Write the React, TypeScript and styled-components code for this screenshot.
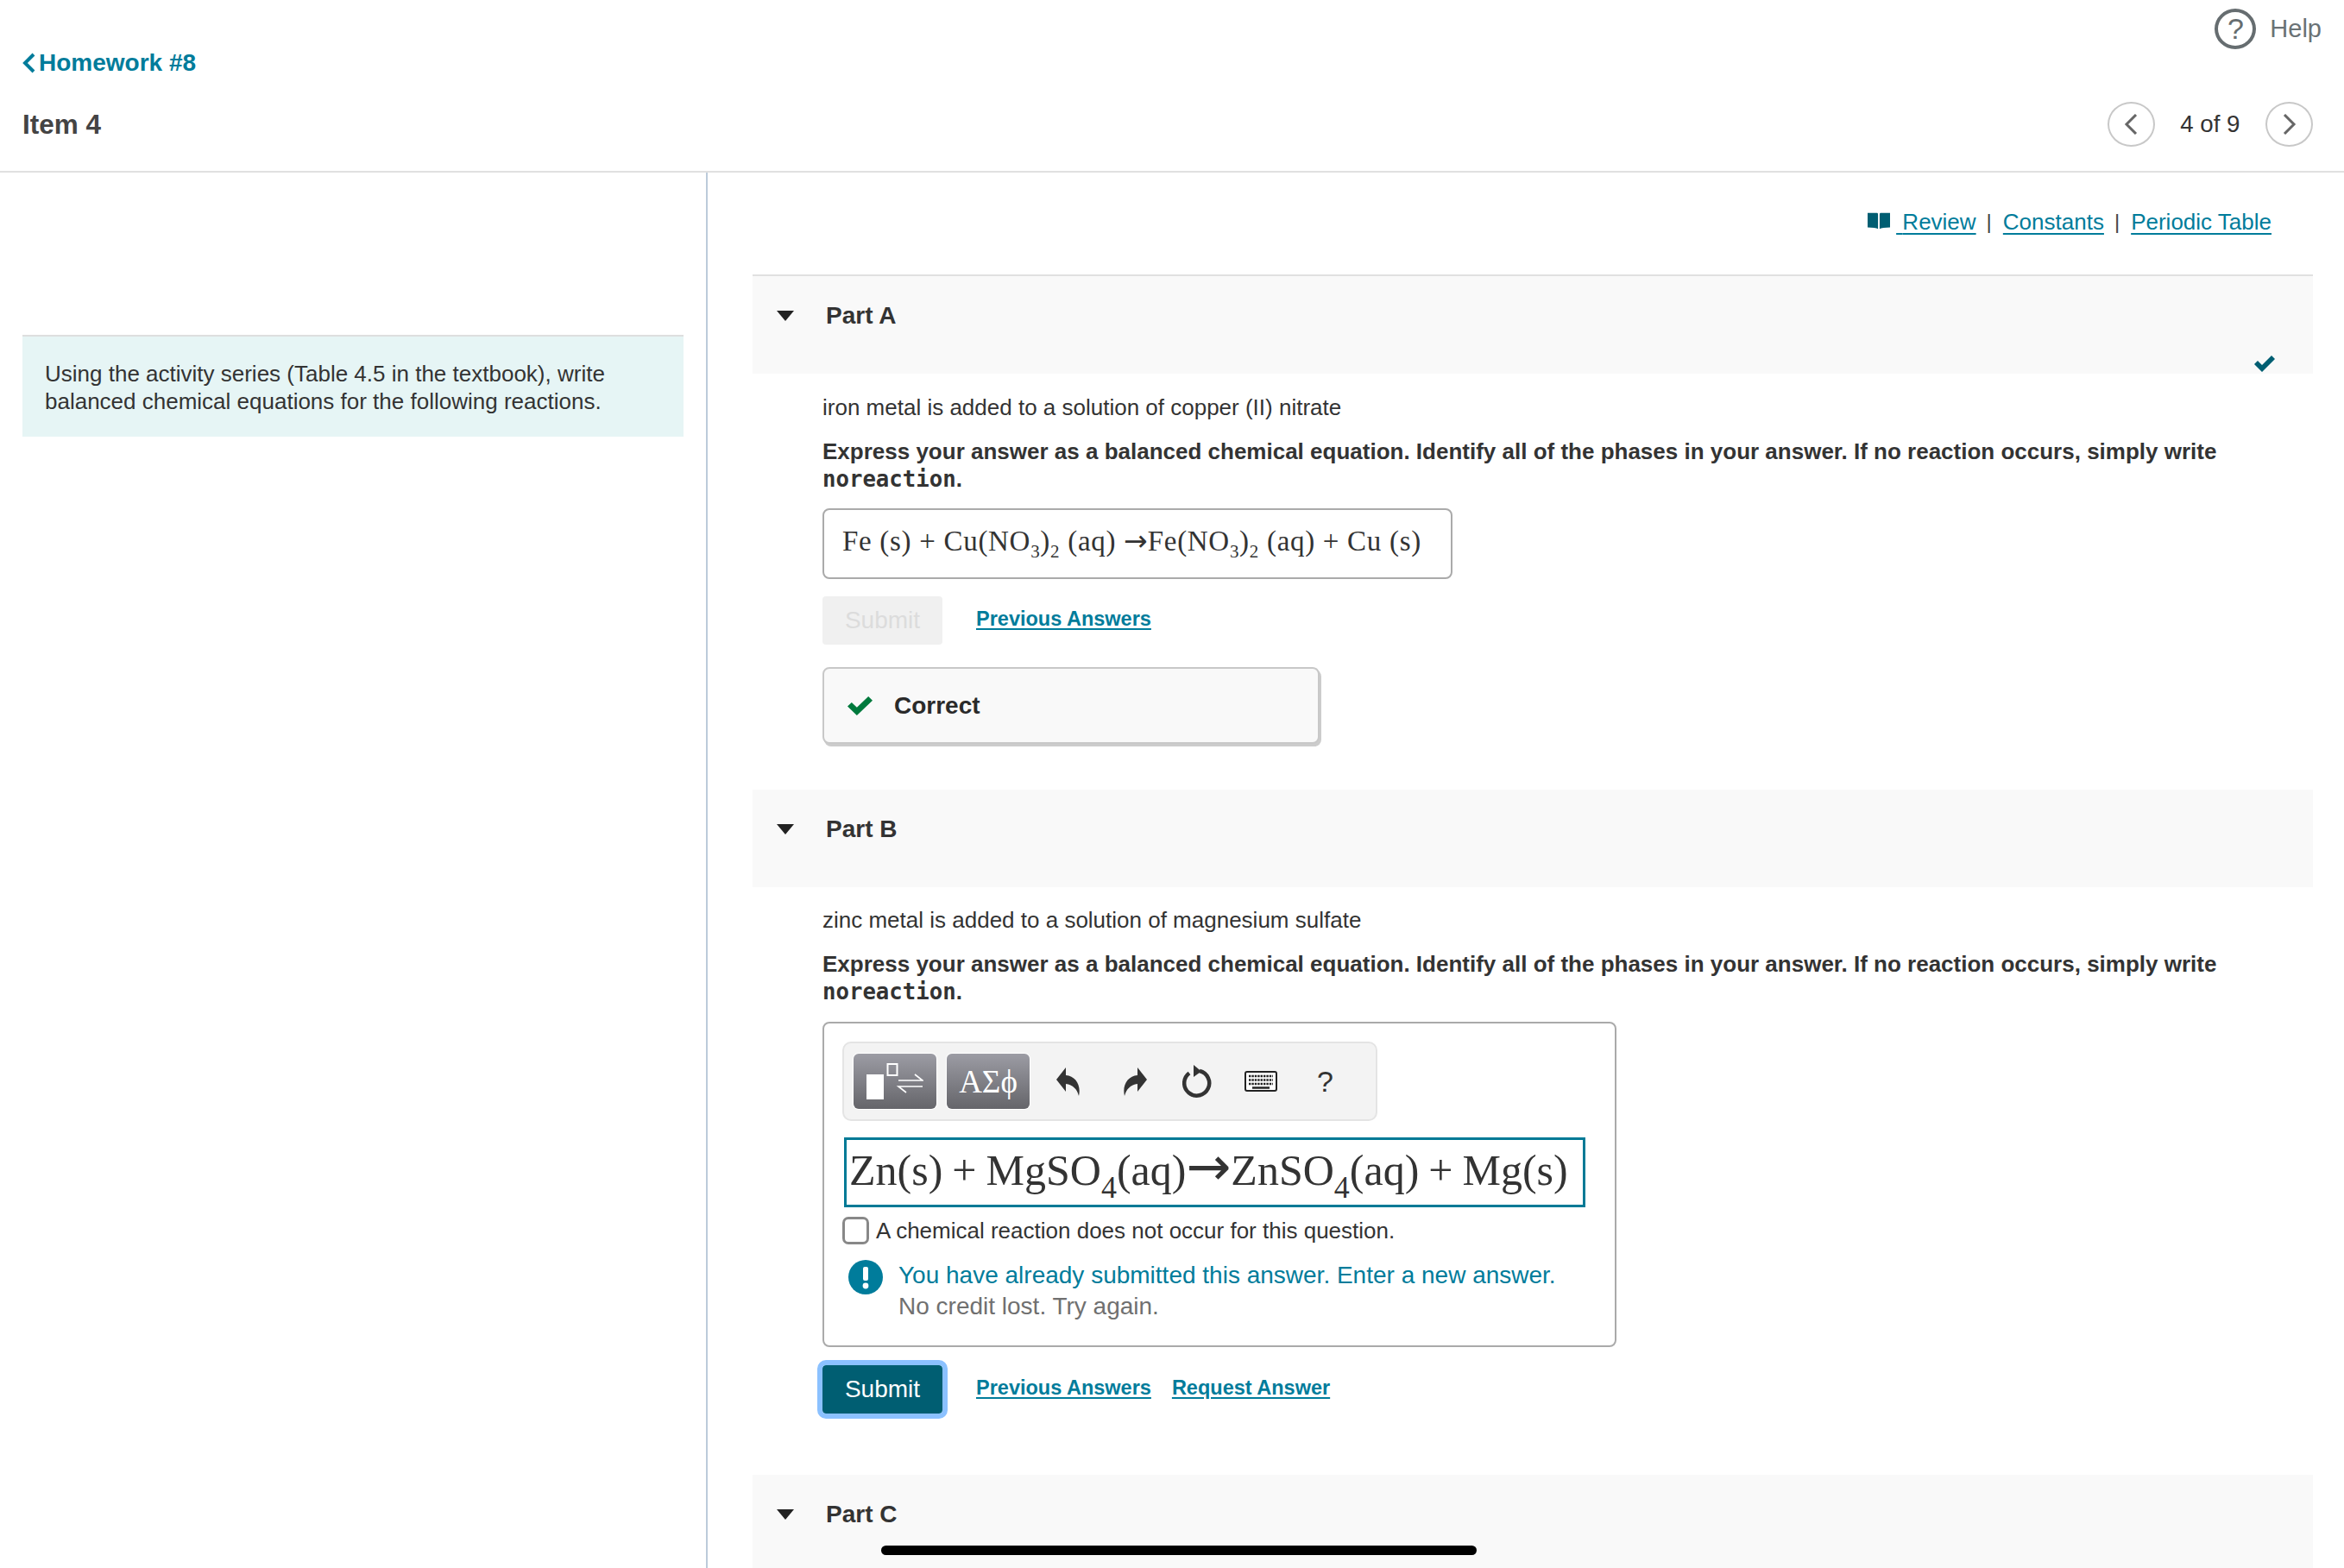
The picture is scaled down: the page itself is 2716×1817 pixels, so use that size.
import React from "react";
import styled, { createGlobalStyle } from "styled-components";

const Global = createGlobalStyle`
  html, body { margin: 0; padding: 0; background: #fff; }
  body { font-family: "Liberation Sans", Arial, sans-serif; color: #333; }
  #root { height: 1817px; overflow: hidden; }
  * { box-sizing: border-box; }
`;

const Page = styled.div`position: relative; height: 1817px; overflow: hidden; display: flex; flex-direction: column;`;
const Header = styled.header`height: 200px; border-bottom: 2px solid #e0e0e0; padding: 0 36px 0 26px; flex: none;`;
const HelpRow = styled.div`height: 57px; padding-top: 10px; margin-right: -10px; display: flex; justify-content: flex-end; gap: 16px; color: #6a7275; font-size: 29px;`;
const HelpCircle = styled.span`width: 48px; height: 47px; border: 4px solid #666d70; border-radius: 50%; display: flex; align-items: center; justify-content: center; font-size: 34px; color: #666d70;`;
const HelpText = styled.span`line-height: 47px;`;
const BackLink = styled.a`display: flex; align-items: center; gap: 4px; height: 32px; color: #007c9b; font-size: 28px; font-weight: 700;`;
const ItemRow = styled.div`display: flex; justify-content: space-between; align-items: center; padding-top: 29px;`;
const ItemTitle = styled.h1`margin: 0; font-size: 31.5px; font-weight: 700; color: #444;`;
const Pager = styled.div`display: flex; align-items: center; gap: 29.5px; font-size: 27.7px; color: #333;`;
const PagerButton = styled.span`width: 55px; height: 52px; border: 2px solid #c8c8c8; border-radius: 50%; display: flex; align-items: center; justify-content: center;`;

const Main = styled.main`flex: 1; display: grid; grid-template-columns: 820px 1fr; min-height: 0;`;
const LeftColumn = styled.aside`border-right: 2px solid #bccbda; padding: 188px 26px 0 26px;`;
const Intro = styled.div`border-top: 2px solid #dedede; background: #e6f5f5; padding: 27px 26px 25px; font-size: 26px; line-height: 32px; color: #333;`;
const RightColumn = styled.section`padding: 41px 36px 0 52px;`;
const TopLinks = styled.nav`display: flex; justify-content: flex-end; align-items: center; height: 32px; padding-right: 48px; margin-bottom: 45px; font-size: 26px; color: #444;`;
const TextLink = styled.a`color: #007c9b; text-decoration: underline; text-underline-offset: 4px; white-space: pre;`;
const BookIcon = styled.svg`width: 26px; height: 20px; margin: -2px 7px 0 0;`;
const Sep = styled.span`margin: 0 13px 0 12px; font-size: 24px;`;

const PartHeader = styled.div<{ $border?: boolean }>`
  position: relative; display: flex; gap: 37px; align-items: flex-start; background: #f9f9f9;
  height: ${(p) => (p.$border ? 115 : 113)}px;
  border-top: ${(p) => (p.$border ? "2px solid #e0e0e0" : "none")};
  padding: 30px 0 0 28px;
`;
const Triangle = styled.span`width: 0; height: 0; margin-top: 10px; border-left: 10.5px solid transparent; border-right: 10.5px solid transparent; border-top: 12px solid #222;`;
const PartTitle = styled.h2`margin: 0; font-size: 28px; line-height: 32px; font-weight: 700; color: #333;`;
const PartCheck = styled.svg`position: absolute; left: 1740px; top: 92px; width: 24px; height: 19px;`;
const PartBody = styled.div<{ $top: number; $bottom: number }>`padding: ${(p) => p.$top}px 0 0 81px; margin-bottom: ${(p) => p.$bottom}px;`;
const Prompt = styled.p`margin: 0; font-size: 26px; line-height: 32px; color: #333;`;
const Instruction = styled.p`margin: 19px 0 0; font-size: 26px; line-height: 32px; font-weight: 700; color: #333;`;
const Mono = styled.code`font-family: "DejaVu Sans Mono", monospace; font-size: 25.7px; line-height: 0; font-weight: 700;`;

const AnswerBox = styled.div`margin-top: 18px; width: 730px; height: 82px; border: 2px solid #aaa; border-radius: 8px; padding: 0 0 6px 21px; display: flex; align-items: center; font-family: "Liberation Serif", serif; font-size: 33px; letter-spacing: 0.7px; color: #333; white-space: pre;`;
const Equation = styled.span`display: block;`;
const SmallSub = styled.sub`font-size: 21px; line-height: 0; vertical-align: -8px;`;
const SmallArrow = styled.span`font-family: "DejaVu Sans", sans-serif; font-size: 33px; font-weight: 400; letter-spacing: 0; line-height: 0;`;
const ActionRow = styled.div<{ $top: number }>`display: flex; align-items: flex-start; margin-top: ${(p) => p.$top}px;`;
const SubmitButton = styled.button<{ $active?: boolean }>`
  width: 139px; height: 56px; border: 0; border-radius: 4px; font: 400 28px "Liberation Sans", sans-serif; padding: 0;
  background: ${(p) => (p.$active ? "#005e72" : "#f0f0f0")};
  color: ${(p) => (p.$active ? "#fff" : "#dcdcdc")};
  outline: ${(p) => (p.$active ? "6px solid #8bc1ff" : "none")};
  margin-right: 39px;
`;
const ActionLink = styled.a`margin: 10px 24px 0 0; line-height: 32px; font-size: 23.5px; font-weight: 700; color: #007c9b; text-decoration: underline; text-underline-offset: 3px;`;
const Correct = styled.div`margin-top: 26px; width: 576px; height: 89px; background: #f9f9f9; border: 2px solid #c8c8c8; border-radius: 8px; box-shadow: 2px 3px 0 #ccc; display: flex; align-items: center; gap: 25px; padding-left: 27px; font-size: 28px; font-weight: 700; color: #2a2a2a;`;

const EditorBox = styled.div`margin-top: 19px; width: 920px; height: 377px; border: 2px solid #aaa; border-radius: 8px; padding: 21px 0 0 21px;`;
const Toolbar = styled.div`width: 620px; height: 92px; background: #f3f3f3; border: 2px solid #e4e4e4; border-radius: 10px; display: flex; align-items: center; padding-left: 11px;`;
const ToolButton = styled.span`width: 96px; height: 64px; margin-right: 12px; border-radius: 6px; background: linear-gradient(#9c9ca4, #65656a); box-shadow: 0 0 0 1px #fff; display: flex; align-items: center; justify-content: center; color: #fff; font-family: "Liberation Serif", "DejaVu Serif", serif; font-size: 37px;`;
const ToolIcon = styled.svg<{ $w: number; $left: number }>`flex: none; width: ${(p) => p.$w}px; margin-left: ${(p) => p.$left}px;`;
const ToolQuestion = styled.span`margin-left: 46px; font-size: 34px; color: #333; width: 18px; text-align: center;`;
const MathInput = styled.div`margin: 19px 0 0 2px; width: 859px; height: 81px; border: 3px solid #007a96; display: flex; align-items: center; padding: 0 0 6px 3px; font-family: "Liberation Serif", serif; font-size: 50px; color: #333; white-space: pre;`;
const MathSub = styled.sub`font-size: 36px; line-height: 0; vertical-align: -15px;`;
const MathPlus = styled.span`margin: 0 11px;`;
const MathArrow = styled.span`font-family: "DejaVu Sans", sans-serif; font-size: 62px; line-height: 0;`;
const CheckRow = styled.label`margin-top: 11px; display: flex; align-items: center; gap: 8px; font-size: 26px; line-height: 32px; color: #333;`;
const CheckBox = styled.span`width: 31px; height: 32px; border: 3px solid #888; border-radius: 7px;`;
const Feedback = styled.div`margin: 18px 0 0 7px; display: flex; gap: 18px; font-size: 28px; line-height: 36px;`;
const InfoIcon = styled.svg`width: 40px; height: 40px; flex: none;`;
const FeedbackLead = styled.div`color: #007c9b;`;
const FeedbackNote = styled.div`color: #707070;`;
const HomeBar = styled.div`position: absolute; left: 1021px; top: 1791px; width: 690px; height: 11px; border-radius: 6px; background: #000;`;

const Tick = ({ color }: { color: string }) => (
  <path d="M0 10 L4 6 L9 11 L20 0 L24 4 L9 19 Z" fill={color} />
);

const Undo = ({ flip }: { flip?: boolean }) => (
  <g transform={flip ? "translate(28 0) scale(-1 1)" : undefined}>
    <path d="M0 14 L11 0 V9 C22 10 29 20 26 33 C24 25 19 20 11 19 V28 Z" fill="#333" />
  </g>
);

export default function App() {
  return (
    <Page>
      <Global />
      <Header>
        <HelpRow>
          <HelpCircle>?</HelpCircle>
          <HelpText>Help</HelpText>
        </HelpRow>
        <BackLink>
          <svg width="15" height="24" viewBox="0 0 15 24"><path d="M13 2 L3 12 L13 22" fill="none" stroke="#007c9b" strokeWidth="4" /></svg>
          Homework #8
        </BackLink>
        <ItemRow>
          <ItemTitle>Item 4</ItemTitle>
          <Pager>
            <PagerButton>
              <svg width="16" height="24" viewBox="0 0 16 24"><path d="M14 1 L3 12 L14 23" fill="none" stroke="#666" strokeWidth="3" /></svg>
            </PagerButton>
            <span>4 of 9</span>
            <PagerButton>
              <svg width="16" height="24" viewBox="0 0 16 24"><path d="M2 1 L13 12 L2 23" fill="none" stroke="#666" strokeWidth="3" /></svg>
            </PagerButton>
          </Pager>
        </ItemRow>
      </Header>
      <Main>
        <LeftColumn>
          <Intro>
            Using the activity series (Table 4.5 in the textbook), write balanced chemical equations for the following reactions.
          </Intro>
        </LeftColumn>
        <RightColumn>
          <TopLinks>
            <BookIcon viewBox="0 0 28 20">
              <path d="M0 0 H12 Q13 0 13 2 V20 Q10 18 0 18 Z M28 0 H16 Q15 0 15 2 V20 Q18 18 28 18 Z" fill="#005e72" />
            </BookIcon>
            <TextLink>{" "}Review</TextLink>
            <Sep>|</Sep>
            <TextLink>Constants</TextLink>
            <Sep>|</Sep>
            <TextLink>Periodic Table</TextLink>
          </TopLinks>

          <PartHeader $border>
            <Triangle />
            <PartTitle>Part A</PartTitle>
            <PartCheck viewBox="0 0 24 19"><Tick color="#005e72" /></PartCheck>
          </PartHeader>
          <PartBody $top={23} $bottom={53}>
            <Prompt>iron metal is added to a solution of copper (II) nitrate</Prompt>
            <Instruction>
              Express your answer as a balanced chemical equation. Identify all of the phases in your answer. If no reaction occurs, simply write <Mono>noreaction</Mono>.
            </Instruction>
            <AnswerBox>
              <Equation>
                Fe (s) + Cu(NO<SmallSub>3</SmallSub>)<SmallSub>2</SmallSub> (aq) <SmallArrow>→</SmallArrow>Fe(NO<SmallSub>3</SmallSub>)<SmallSub>2</SmallSub> (aq) + Cu (s)
              </Equation>
            </AnswerBox>
            <ActionRow $top={20}>
              <SubmitButton>Submit</SubmitButton>
              <ActionLink>Previous Answers</ActionLink>
            </ActionRow>
            <Correct>
              <svg width="29" height="22" viewBox="0 0 24 19" preserveAspectRatio="none"><Tick color="#007a3d" /></svg>
              Correct
            </Correct>
          </PartBody>

          <PartHeader>
            <Triangle />
            <PartTitle>Part B</PartTitle>
          </PartHeader>
          <PartBody $top={22} $bottom={71}>
            <Prompt>zinc metal is added to a solution of magnesium sulfate</Prompt>
            <Instruction>
              Express your answer as a balanced chemical equation. Identify all of the phases in your answer. If no reaction occurs, simply write <Mono>noreaction</Mono>.
            </Instruction>
            <EditorBox>
              <Toolbar>
                <ToolButton>
                  <svg width="66" height="42" viewBox="0 0 66 42">
                    <rect x="0" y="13" width="20" height="29" fill="#fff" />
                    <rect x="24.5" y="1" width="11" height="13" fill="none" stroke="#fff" strokeWidth="2" />
                    <path d="M37 20 H65 L56 13 M65 27 H37 L46 34" fill="none" stroke="#fff" strokeWidth="1.6" />
                  </svg>
                </ToolButton>
                <ToolButton>ΑΣϕ</ToolButton>
                <ToolIcon $w={28} $left={19} height="33" viewBox="0 0 28 33"><Undo /></ToolIcon>
                <ToolIcon $w={28} $left={49} height="33" viewBox="0 0 28 33"><Undo flip /></ToolIcon>
                <ToolIcon $w={34} $left={41} height="38" viewBox="0 0 34 38">
                  <path d="M20 7 A14.5 14.5 0 1 1 8 9.5" fill="none" stroke="#333" strokeWidth="4.5" />
                  <path d="M13 0 L22 7.5 L13 14 Z" fill="#333" />
                </ToolIcon>
                <ToolIcon $w={38} $left={38} height="24" viewBox="0 0 38 24">
                  <rect x="1" y="1" width="36" height="22" rx="2" fill="#fff" stroke="#222" strokeWidth="2" />
                  <path d="M5 6 H33 M5 10.5 H33 M5 15 H33" stroke="#222" strokeWidth="2.6" strokeDasharray="2.4 1" />
                  <path d="M9 19.5 H29" stroke="#222" strokeWidth="2.5" />
                </ToolIcon>
                <ToolQuestion>?</ToolQuestion>
              </Toolbar>
              <MathInput>
                <Equation>
                  Zn(s)<MathPlus>+</MathPlus>MgSO<MathSub>4</MathSub>(aq)<MathArrow>→</MathArrow>ZnSO<MathSub>4</MathSub>(aq)<MathPlus>+</MathPlus>Mg(s)
                </Equation>
              </MathInput>
              <CheckRow>
                <CheckBox />
                A chemical reaction does not occur for this question.
              </CheckRow>
              <Feedback>
                <InfoIcon viewBox="0 0 40 40">
                  <circle cx="20" cy="20" r="20" fill="#007c9b" />
                  <rect x="17" y="8" width="6" height="16" rx="2" fill="#fff" />
                  <circle cx="20" cy="30" r="3.4" fill="#fff" />
                </InfoIcon>
                <div>
                  <FeedbackLead>You have already submitted this answer. Enter a new answer.</FeedbackLead>
                  <FeedbackNote>No credit lost. Try again.</FeedbackNote>
                </div>
              </Feedback>
            </EditorBox>
            <ActionRow $top={21}>
              <SubmitButton $active>Submit</SubmitButton>
              <ActionLink>Previous Answers</ActionLink>
              <ActionLink>Request Answer</ActionLink>
            </ActionRow>
          </PartBody>

          <PartHeader>
            <Triangle />
            <PartTitle>Part C</PartTitle>
          </PartHeader>
        </RightColumn>
      </Main>
      <HomeBar />
    </Page>
  );
}
